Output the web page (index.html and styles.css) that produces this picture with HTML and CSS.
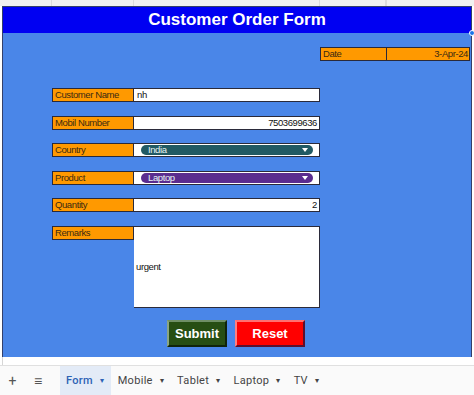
FILE: index.html
```html
<!DOCTYPE html>
<html lang="en">

<head>
  <meta charset="UTF-8">
  <meta name="viewport" content="width=device-width, initial-scale=1.0">
  <title>Customer Order Form</title>
  <link rel="stylesheet" href="styles.css">
</head>

<body>
  <div class="grid-top">
    <span class="cell" style="width:52px"></span>
    <span class="cell" style="width:82px"></span>
    <span class="cell" style="width:186px"></span>
    <span class="cell" style="width:66px"></span>
    <span class="cell"></span>
  </div>

  <section class="sheet">
    <header class="title">Customer Order Form</header>
    <span class="handle"></span>

    <div class="body">
      <div class="date-row">
        <div class="label">Date</div>
        <div class="date-val">3-Apr-24</div>
      </div>

      <div class="form">
        <div class="label">Customer Name</div>
        <div class="value">nh</div>

        <div class="label">Mobil Number</div>
        <div class="value right">7503699636</div>

        <div class="label">Country</div>
        <div class="value">
          <span class="chip teal">India<span class="caret"></span></span>
        </div>

        <div class="label">Product</div>
        <div class="value">
          <span class="chip purple">Laptop<span class="caret"></span></span>
        </div>

        <div class="label">Quantity</div>
        <div class="value right">2</div>

        <div class="label">Remarks</div>
        <div class="value remarks">urgent</div>
      </div>

      <div class="buttons">
        <button class="btn submit">Submit</button>
        <button class="btn reset">Reset</button>
      </div>
    </div>
  </section>

  <div class="gap"></div>

  <nav class="tabs">
    <span class="tool">+</span>
    <span class="tool">&#8801;</span>
    <span class="tab active">Form <span class="arr">&#9662;</span></span>
    <span class="tab">Mobile <span class="arr">&#9662;</span></span>
    <span class="tab">Tablet <span class="arr">&#9662;</span></span>
    <span class="tab">Laptop <span class="arr">&#9662;</span></span>
    <span class="tab">TV <span class="arr">&#9662;</span></span>
  </nav>
</body>

</html>
```

FILE: styles.css
```css
*,
*::after,
*::before {
  box-sizing: border-box;
}

body {
  margin: 0;
  background-color: #fff;
  font-family: "Liberation Sans", Arial, sans-serif;
}

/* franja de la grilla de la hoja arriba */
.grid-top {
  display: flex;
  height: 6px;
  background-color: #f1f1f1;
}

.grid-top .cell {
  border-right: 1px solid #dcdcdc;
}

.sheet {
  position: relative;
  margin-left: 2px;
  width: 470px;
  border-left: 1px solid #34406a;
  border-right: 1px solid #34406a;
  border-top: 1px solid #34406a;
}

.title {
  height: 26px;
  background-color: #0000f2;
  color: #fff;
  font-weight: bold;
  font-size: 17px;
  line-height: 26px;
  text-align: center;
}

.handle {
  position: absolute;
  right: -4px;
  top: 23px;
  width: 6px;
  height: 6px;
  border-radius: 50%;
  background-color: #1a73e8;
  border: 1px solid #fff;
}

.body {
  background-color: #4a86e8;
  height: 324px;
  padding-top: 14px;
}

.label {
  background-color: #ff9900;
  border: 1px solid #2a2a3a;
  color: #3b2a12;
  font-size: 9.5px;
  letter-spacing: -0.4px;
  line-height: 12px;
  padding-left: 2px;
  height: 14px;
}

.date-row {
  display: grid;
  grid-template-columns: 66px 84px;
  margin-left: 317px;
}

.date-row .label {
  border-right: none;
}

.date-val {
  background-color: #ff9900;
  border: 1px solid #2a2a3a;
  color: #3b2a12;
  font-size: 9.5px;
  letter-spacing: -0.4px;
  line-height: 12px;
  text-align: right;
  padding-right: 1px;
  height: 14px;
}

.form {
  display: grid;
  grid-template-columns: 82px 186px;
  row-gap: 13.6px;
  margin-left: 49px;
  margin-top: 27px;
}

.value {
  background-color: #fff;
  border: 1px solid #2a2a3a;
  border-left: none;
  color: #111;
  font-size: 9.5px;
  letter-spacing: -0.4px;
  line-height: 12px;
  padding-left: 3px;
  padding-right: 2px;
  height: 14px;
}

.right {
  text-align: right;
}

.remarks {
  height: 82px;
  display: flex;
  align-items: center;
  padding-left: 2px;
}

.chip {
  display: flex;
  align-items: center;
  justify-content: space-between;
  margin: 1px 4px 0 4px;
  height: 10px;
  border-radius: 6px;
  padding: 0 5px 0 7px;
  color: #e6f2f2;
  font-size: 9.5px;
  line-height: 10px;
}

.teal {
  background-color: #215a64;
}

.purple {
  background-color: #5b2c8f;
}

.caret {
  width: 0;
  height: 0;
  border-left: 3.5px solid transparent;
  border-right: 3.5px solid transparent;
  border-top: 4px solid #fff;
}

.buttons {
  display: flex;
  justify-content: center;
  gap: 8px;
  margin-top: 12px;
  padding-right: 2px;
}

.btn {
  height: 27px;
  font-family: "Liberation Sans", Arial, sans-serif;
  font-weight: bold;
  font-size: 13px;
  color: #fff;
  padding: 0;
  border-style: solid;
  border-width: 2px;
}

.submit {
  width: 60px;
  background-color: #274e13;
  border-color: #6f8f66 #10240a #10240a #8aa584;
}

.reset {
  width: 70px;
  background-color: #ff0000;
  border-color: #ff7070 #5a1030 #5a1030 #ff8080;
}

.gap {
  height: 8px;
  margin-left: 2px;
  border-left: 1px solid #d6d6d6;
}

.tabs {
  display: flex;
  align-items: stretch;
  height: 30px;
  border-top: 1px solid #e0e0e0;
  background-color: #fafafa;
  font-family: Roboto, "Noto Sans", sans-serif;
  font-size: 11px;
  color: #444;
}

.tool {
  display: flex;
  align-items: center;
  justify-content: center;
  width: 26px;
  font-size: 14px;
  color: #555;
}

.tool:first-child {
  width: 25px;
}

.tool:nth-child(2) {
  margin-right: 9px;
}

.tab {
  display: flex;
  align-items: center;
  padding: 0 6.5px;
  letter-spacing: 0.3px;
  white-space: pre;
}

.tab .arr {
  font-size: 8px;
  margin-left: 4px;
}

.tab.active {
  background-color: #e3ebf7;
  color: #2d62b5;
  font-weight: 500;
  padding: 0 7px 0 6px;
}
```
